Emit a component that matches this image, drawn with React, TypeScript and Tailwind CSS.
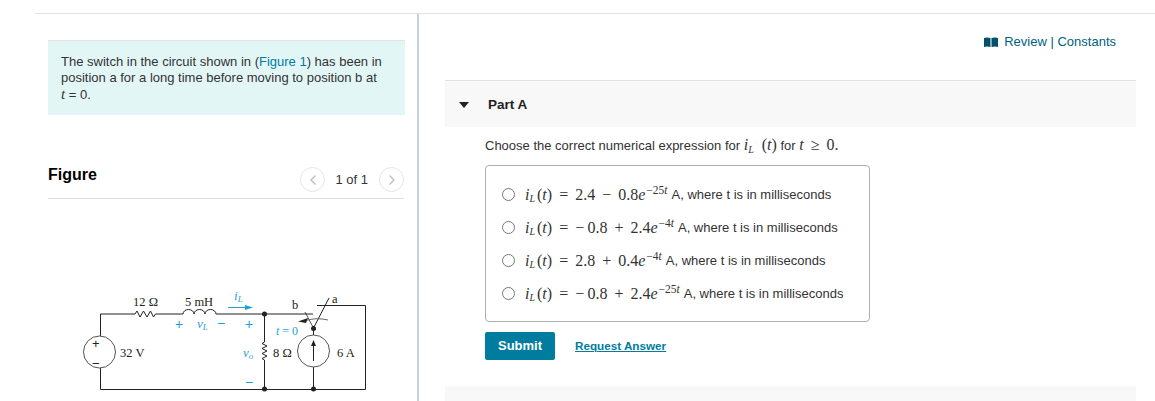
import { ChevronLeft, ChevronRight } from 'lucide-react';

const serif = "font-['Liberation_Serif',serif]";

function Circuit() {
  return (
    <svg width="320" height="131" viewBox="0 0 320 131" className="block" fill="none">
      <g stroke="#222" strokeWidth="1">
        <path d="M40.500 45H75l2-3 3 6 3.500-6 3.500 6 3.500-6 3 6 2-3H123" />
        <path d="M123 45a5.500 4.500 0 0 1 11 0a5.500 4.500 0 0 1 11 0a5.500 4.500 0 0 1 11 0H253" />
        <path d="M40.500 45V67M40.500 99V120.500H305.500V36.500H257" />
        <path d="M204.500 45V73l-2.500 1.500 5 2.500-5 2.500 5 2.500-5 2.500 5 2.500-5 2.500 2.500 1.500V120.500" />
        <path d="M253.500 60V66M253.500 98V120.500" />
        <circle cx="39.500" cy="83" r="16" stroke="#555" />
        <circle cx="253.500" cy="82" r="16" stroke="#555" />
        <path d="M253.500 92V76" />
        <path d="M253.500 59L269 29" />
        <path d="M253.500 59L245 43" strokeWidth="0.800" />
        <path d="M244 52Q256 48 268 51" stroke="#666" />
      </g>
      <path d="M253.500 71l-2.500 6h5z" fill="#222" />
      <path d="M238 52.500l10-3.500-2 5z" fill="#222" />
      <circle cx="204.500" cy="45" r="2.500" fill="#222" />
      <circle cx="204.500" cy="120" r="2.500" fill="#222" />
      <circle cx="253.500" cy="120" r="2.500" fill="#222" />
      <circle cx="253.500" cy="59.500" r="2.500" fill="#222" />
      <path d="M168 38.500H187" stroke="#1f9fd6" strokeWidth="1" />
      <path d="M193 38.500l-8-2.500v5z" fill="#1f9fd6" />
      <g fontFamily="'Liberation Serif', serif" fontSize="12.500" fill="#222">
        <text x="73" y="37">12 Ω</text>
        <text x="125" y="37">5 mH</text>
        <text x="232" y="40">b</text>
        <text x="272" y="34">a</text>
        <text x="60" y="88">32 V</text>
        <text x="213" y="88">8 Ω</text>
        <text x="277" y="88">6 A</text>
      </g>
      <g fontFamily="'Liberation Serif', serif" fontSize="13" fill="#1f9fd6" fontStyle="italic">
        <text x="174" y="31">i<tspan fontSize="9" dy="2">L</tspan></text>
        <text x="137" y="59">v<tspan fontSize="9" dy="2">L</tspan></text>
        <text x="183" y="88">v<tspan fontSize="9" dy="2">o</tspan></text>
        <text x="216" y="66" fontSize="12">t<tspan fontStyle="normal"> = 0</tspan></text>
      </g>
      <g fontFamily="'Liberation Sans', sans-serif" fontSize="14" fill="#1f9fd6">
        <text x="115" y="60">+</text>
        <text x="157" y="59">−</text>
        <text x="185" y="60">+</text>
        <text x="185" y="118">−</text>
      </g>
      <g fontFamily="'Liberation Sans', sans-serif" fontSize="13" fill="#222">
        <text x="32" y="79">+</text>
        <text x="32" y="99">−</text>
      </g>
    </svg>
  );
}

function Equation({ before, sup }: { before: string; sup: string }) {
  return (
    <span className={`${serif} text-[16px] [word-spacing:3px] text-[#333]`}>
      <i>i</i>
      <sub className="text-[10px] italic">L</sub>
      <span className="ml-[2px]">(<i>t</i>)</span> = {before}
      <i>e</i>
      <sup className="ml-[1px] text-[11.500px]">
        {sup}
        <i>t</i>
      </sup>
    </span>
  );
}

function Option({ before, sup }: { before: string; sup: string }) {
  return (
    <label className="flex h-[33px] items-center">
      <span className="mr-[10px] size-[13px] shrink-0 rounded-full border border-[#777] bg-white" />
      <Equation before={before} sup={sup} />
      <span className="ml-[4px]">A, where t is in milliseconds</span>
    </label>
  );
}

export default function App() {
  return (
    <div className="h-[401px] w-[1155px] overflow-hidden bg-white pt-[13px] pl-[35px] font-['Liberation_Sans',sans-serif] text-[13px] leading-[16px] text-[#333]">
      <div className="flex h-[388px] border-t border-[#e3e3e3]">
        <div className="h-full w-[384px] border-r-2 border-[#c5d3e0] pt-[26px] pl-[13px]">
          <div className="h-[75px] w-[357px] border-t border-[#e0e6e6] bg-[#e3f6f6] px-[13px] pt-[13px]">
            The switch in the circuit shown in (<span className="text-[#007c9e]">Figure 1</span>) has been in position a for a long time before moving to position b at
            <br />
            <i className={`${serif} text-[15px]`}>t</i> = 0.
          </div>
          <div className="mt-[38px] flex h-[46px] w-[356px] items-start justify-between border-b border-[#e0e0e0]">
            <h2 className="mt-[14px] text-[16px] font-bold text-black">Figure</h2>
            <div className="mt-[14px] flex items-center">
              <span className="flex size-[25px] items-center justify-center rounded-full border border-[#e5e5e5] text-[#bbb]">
                <ChevronLeft size={16} />
              </span>
              <span className="mr-[11px] ml-[10px] text-[#333]">1 of 1</span>
              <span className="flex size-[25px] items-center justify-center rounded-full border border-[#e5e5e5] text-[#bbb]">
                <ChevronRight size={16} />
              </span>
            </div>
          </div>
          <div className="mt-[70px] ml-[12px]">
            <Circuit />
          </div>
        </div>
        <div className="flex-1 pt-[20px] pl-[26px]">
          <div className="mr-[39px] flex items-center justify-end text-[#00617d]">
            <svg width="14" height="10" viewBox="0 0 14 10" className="mr-[6px]" fill="#00506b">
              <path d="M0 1Q3 0 6.500 1V10Q3 9 0 10zM7.500 1Q11 0 14 1V10Q11 9 7.500 10z" />
            </svg>
            Review | Constants
          </div>
          <div className="mt-[30px] flex h-[47px] w-[691px] items-center border-t border-[#e3e3e3] bg-[#f8f8f8] pt-[1px] pl-[14px] text-[13.500px] font-bold text-[#222]">
            <span className="mr-[19px] h-0 w-0 border-x-[5px] border-t-[6px] border-x-transparent border-t-[#222]" />
            Part A
          </div>
          <div className="mt-[8px] pl-[40px]">
            <p className="mt-[10px]">
              Choose the correct numerical expression for{' '}
              <span className={`${serif} text-[16px] [word-spacing:3px]`}>
                <i>i</i>
                <sub className="text-[10px] italic">L</sub>
                <span className="ml-[8px]">(<i>t</i>)</span>
              </span>{' '}
              for <span className={`${serif} text-[16px] [word-spacing:3px]`}><i>t</i> ≥ 0.</span>
            </p>
            <div className="mt-[11px] h-[157px] w-[385px] rounded-[4px] border border-[#b0b0b0] pt-[12px] pr-[17px] pl-[16px]">
              <Option before="2.4 − 0.8" sup="−25" />
              <Option before={'−\u20090.8 + 2.4'} sup="−4" />
              <Option before="2.8 + 0.4" sup="−4" />
              <Option before={'−\u20090.8 + 2.4'} sup="−25" />
            </div>
            <div className="mt-[10px] flex items-center">
              <button className="h-[28px] w-[70px] rounded-[2px] bg-[#007c9e] text-[13px] font-bold text-white">Submit</button>
              <a className="ml-[20px] text-[11.700px] font-bold text-[#007c9e] underline">Request Answer</a>
            </div>
          </div>
          <div className="mt-[26px] h-[20px] w-[691px] bg-[#f8f8f8]" />
        </div>
      </div>
    </div>
  );
}
